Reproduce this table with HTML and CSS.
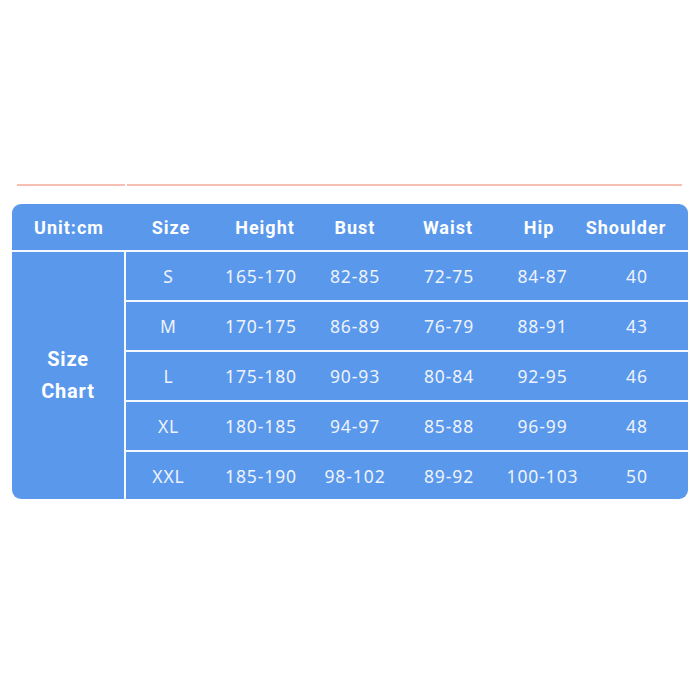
FILE: index.html
```html
<!DOCTYPE html>
<html>
<head>
<meta charset="utf-8">
<link rel="stylesheet" href="styles.css">
</head>
<body>
<div class="page">
  <div class="rule"><span class="seg short"></span><span class="seg long"></span></div>
  <div class="chart">
    <div class="head">
      <div>Unit:cm</div><div>Size</div><div>Height</div><div>Bust</div><div>Waist</div><div>Hip</div><div>Shoulder</div>
    </div>
    <div class="body">
      <div class="label">Size<br>Chart</div>
      <div class="rows">
        <div class="row"><div>S</div><div>165-170</div><div>82-85</div><div>72-75</div><div>84-87</div><div>40</div></div>
        <div class="row"><div>M</div><div>170-175</div><div>86-89</div><div>76-79</div><div>88-91</div><div>43</div></div>
        <div class="row"><div>L</div><div>175-180</div><div>90-93</div><div>80-84</div><div>92-95</div><div>46</div></div>
        <div class="row"><div>XL</div><div>180-185</div><div>94-97</div><div>85-88</div><div>96-99</div><div>48</div></div>
        <div class="row"><div>XXL</div><div>185-190</div><div>98-102</div><div>89-92</div><div>100-103</div><div>50</div></div>
      </div>
    </div>
  </div>
</div>
</body>
</html>
```
FILE: styles.css
```css
html, body { margin: 0; padding: 0; background: #fff; }
.page { padding: 184px 12px 0 12px; width: 676px; }
.rule { display: flex; gap: 2px; height: 2px; margin: 0 6px 18px 5px; }
.seg { display: block; height: 2px; background: #f7bfb4; }
.seg.short { width: 108px; }
.seg.long { flex: 1; }
.chart {
  background: #5a98ec;
  border-radius: 9px;
  overflow: hidden;
  color: #fff;
  font-family: "Noto Sans", "Open Sans", sans-serif;
}
.head {
  display: grid;
  grid-template-columns: 114px 86px 100px 86px 100px 86px 1fr;
  height: 46px;
  border-bottom: 2px solid #f4f8ff;
  align-items: center;
  text-align: center;
  font-family: Roboto, "Liberation Sans", sans-serif;
  font-weight: 700;
  font-size: 18px;
  letter-spacing: 1px;
}
.head > div:nth-child(2) { padding-left: 4px; }
.head > div:nth-child(3) { padding-left: 6px; }
.head > div:nth-child(6) { padding-right: 4px; }
.head > div:nth-child(7) { padding-right: 20px; }
.body { display: grid; grid-template-columns: 114px 1fr; }
.label {
  border-right: 2px solid #f4f8ff;
  display: flex;
  align-items: center;
  justify-content: center;
  text-align: center;
  font-family: Roboto, "Liberation Sans", sans-serif;
  font-weight: 700;
  font-size: 20px;
  letter-spacing: 0.8px;
  line-height: 32px;
  padding-bottom: 2px;
}
.rows { display: flex; flex-direction: column; }
.row {
  display: grid;
  grid-template-columns: 85px 100px 88px 100px 87px 1fr;
  height: 48px;
  border-bottom: 2px solid #f4f8ff;
  align-items: center;
  text-align: center;
  font-size: 17.5px;
  letter-spacing: 0.9px;
  color: #eef3fb;
}
.row:last-child { border-bottom: none; height: 47px; }
```
